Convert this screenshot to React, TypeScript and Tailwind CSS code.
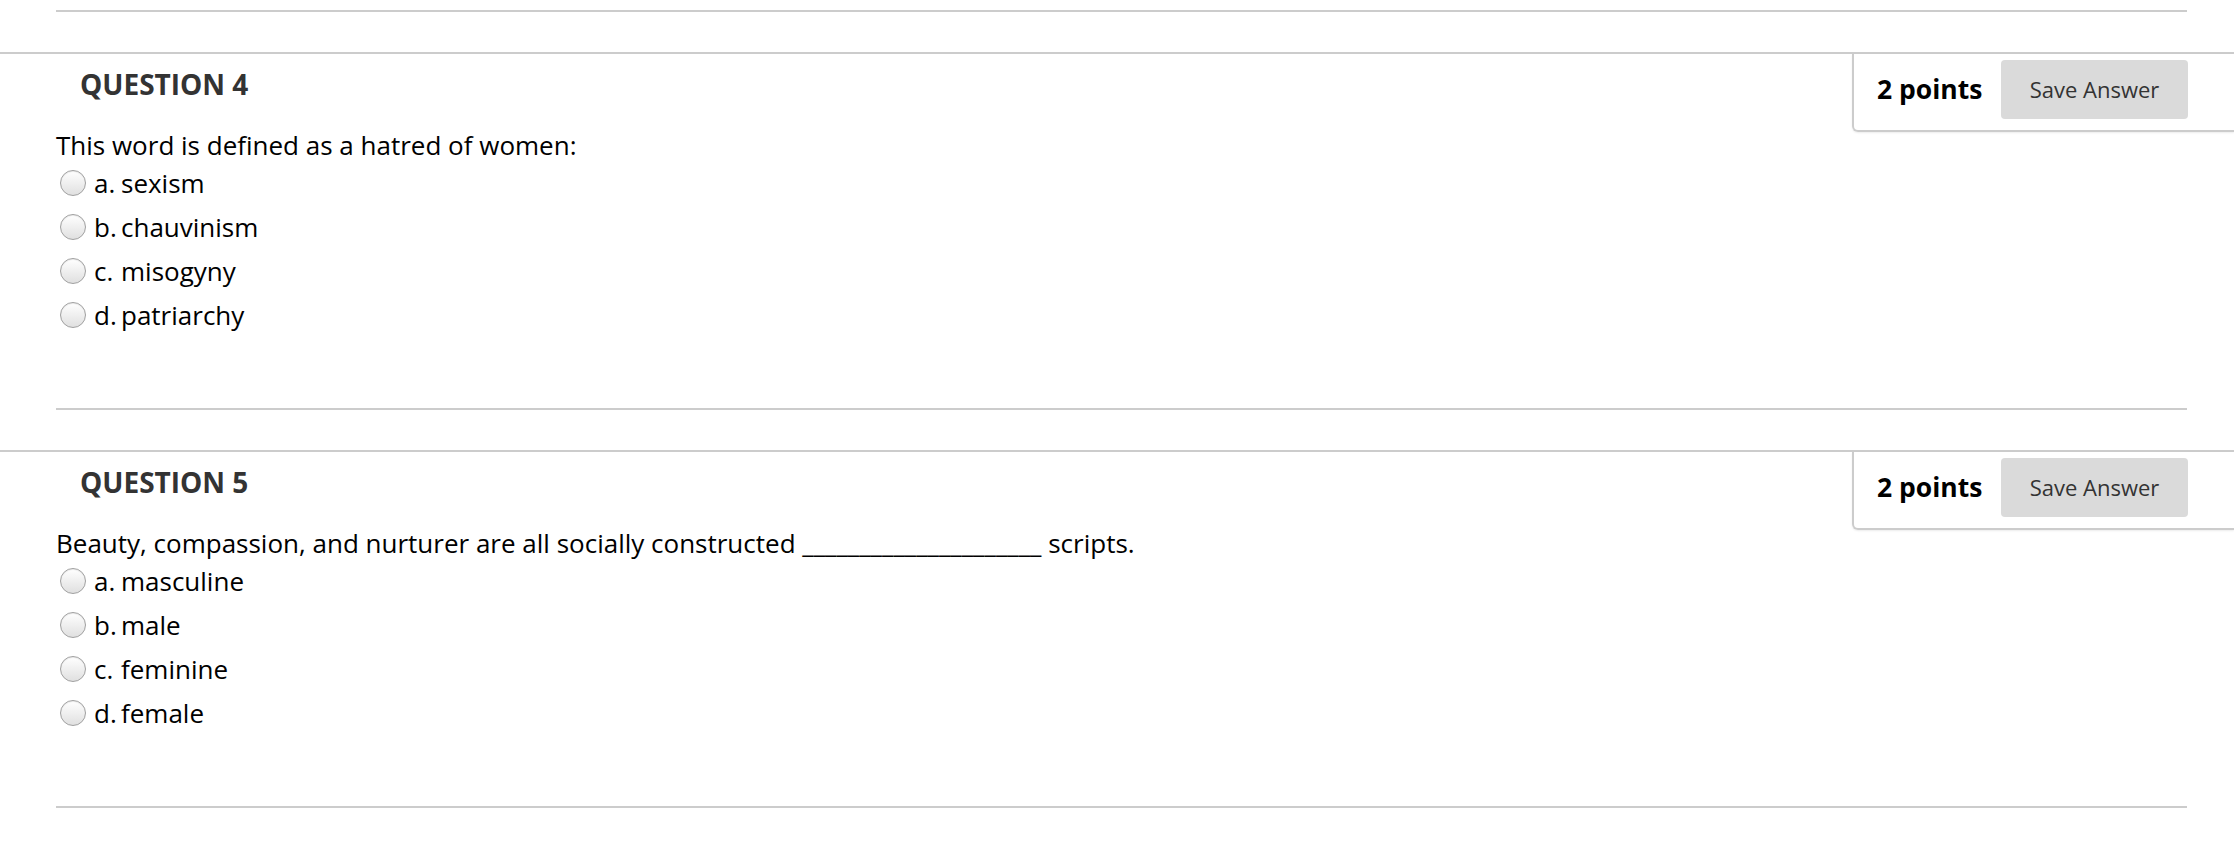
import React from 'react';

type Question = {
  number: number;
  points: number;
  text: string;
  options: { letter: string; label: string }[];
};

const questions: Question[] = [
  {
    number: 4,
    points: 2,
    text: 'This word is defined as a hatred of women:',
    options: [
      { letter: 'a.', label: 'sexism' },
      { letter: 'b.', label: 'chauvinism' },
      { letter: 'c.', label: 'misogyny' },
      { letter: 'd.', label: 'patriarchy' },
    ],
  },
  {
    number: 5,
    points: 2,
    text: 'Beauty, compassion, and nurturer are all socially constructed _____________________ scripts.',
    options: [
      { letter: 'a.', label: 'masculine' },
      { letter: 'b.', label: 'male' },
      { letter: 'c.', label: 'feminine' },
      { letter: 'd.', label: 'female' },
    ],
  },
];

const Radio = () => (
  <span className="ml-[4px] mr-[8px] inline-block h-[26px] w-[26px] shrink-0 rounded-full border border-[#a0a0a0] bg-linear-to-b from-white to-[#e0e0e0] shadow-[inset_0_1px_1px_rgba(0,0,0,0.08)]" />
);

const QuestionBlock = ({ q }: { q: Question }) => (
  <li className="mt-[40px]">
    <div className="border-t-2 border-[#cccccc]">
      <div className="flex items-start justify-between">
        <h3 className="mt-[11px] pl-[80px] text-[28px] font-bold leading-[38px] text-[#333333]">
          QUESTION {q.number}
        </h3>
        <div className="-mb-[10px] flex w-[382px] items-center rounded-bl-[6px] border-b-2 border-l-2 border-[#cccccc] pb-[11px] pl-[23px] pt-[6px] shadow-[0_1px_2px_rgba(0,0,0,0.08)]">
          <span className="text-[26.5px] font-bold leading-none text-black">{q.points} points</span>
          <button className="ml-auto mr-[46px] h-[59px] w-[187px] rounded-[4px] bg-[#dadada] text-[22px] text-[#333333]">
            Save Answer
          </button>
        </div>
      </div>
      <div className="ml-[56px] mr-[47px] mt-[7px]">
        <p className="text-[26px] leading-[32px] text-black">{q.text}</p>
        <ul>
          {q.options.map((o) => (
            <li key={o.letter} className="flex h-[44px] items-center text-[26px] leading-[44px] text-black">
              <Radio />
              <span className="w-[27px] shrink-0">{o.letter}</span>
              <span>{o.label}</span>
            </li>
          ))}
        </ul>
      </div>
      <div className="ml-[56px] mr-[47px] mt-[71px] border-b-2 border-[#cccccc]" />
    </div>
  </li>
);

export default function App() {
  return (
    <div className="h-[862px] w-full overflow-hidden bg-white font-['Open_Sans',sans-serif]">
      <div className="ml-[56px] mr-[47px] h-[12px] border-b-2 border-[#cccccc]" />
      <ol>
        {questions.map((q) => (
          <QuestionBlock key={q.number} q={q} />
        ))}
      </ol>
    </div>
  );
}
